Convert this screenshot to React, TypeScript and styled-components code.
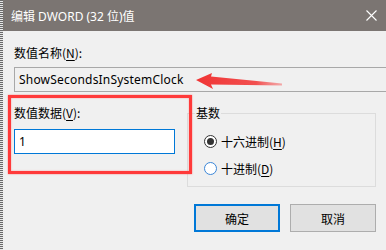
import React from "react";
import styled, { createGlobalStyle } from "styled-components";

const Global = createGlobalStyle`
  html, body { margin: 0; padding: 0; }
  body {
    width: 386px; height: 250px; overflow: hidden; background: #f0f0f0;
    font-family: "Segoe UI", "Noto Sans", "Noto Sans CJK SC", sans-serif;
    font-size: 12px; color: #000;
  }
`;

const Screen = styled.div`
  display: flex; width: 386px; height: 250px; overflow: hidden;
`;

const DottedEdge = styled.div`
  width: 3px; flex: none;
  background: repeating-linear-gradient(to bottom, #6a6a6a 0 1px, #e6e6e6 1px 2px);
`;

const Dialog = styled.div`
  flex: 1; min-width: 0; display: flex; flex-direction: column; background: #f0f0f0;
`;

const TitleBar = styled.div`
  height: 31px; flex: none; background: #7b7572; color: #fff;
  display: flex; align-items: center; justify-content: space-between;
  padding: 0 9px 0 8px;
  font-family: "Noto Sans", "Noto Sans CJK SC", sans-serif; font-size: 12px;
`;

const Content = styled.div`
  padding: 14px 10px 0 11px; display: flex; flex-direction: column;
`;

const Label = styled.div`
  line-height: 16px; height: 16px; white-space: nowrap;
  font-family: "Noto Sans CJK SC", sans-serif;
  u { text-decoration-thickness: 1px; text-underline-offset: 2px; }
`;

const NameField = styled.div`
  position: relative; margin-top: 6px; margin-right: -12px;
`;

const ReadonlyBox = styled.div`
  height: 25px; box-sizing: border-box; border: 1px solid #a8a8a8;
  background: #f0f0f0; padding-left: 4px; display: flex; align-items: center;
  font-family: "Noto Sans", sans-serif; font-size: 12px; letter-spacing: 0.2px; color: #000;
`;

const Arrow = styled.svg`
  position: absolute; left: 181px; top: 3px; width: 90px; height: 20px; overflow: visible;
`;

const MidGrid = styled.div`
  margin-top: 13px; display: grid; grid-template-columns: 161px 189px; column-gap: 12px;
  align-items: start;
`;

const DataColumn = styled.div`
  position: relative; display: flex; flex-direction: column;
`;

const EditBox = styled.div`
  margin-top: 8px; height: 25px; box-sizing: border-box; border: 1px solid #0078d7;
  background: #fff; padding-left: 4px; display: flex; align-items: center;
  font-family: "Noto Sans", sans-serif; font-size: 12px;
`;

const Highlight = styled.div`
  position: absolute; top: -10px; left: -6px; right: -17px; bottom: -20px;
  border: 3px solid #ff3a3a; box-shadow: 0 0 1.5px rgba(255, 70, 70, 0.7), inset 0 0 1.5px rgba(255, 70, 70, 0.7);
  pointer-events: none; z-index: 2;
`;

const GroupBox = styled.fieldset`
  margin: 0; border: 1px solid #dcdcdc; padding: 0 0 10px 7px; min-width: 0;
  display: flex; flex-direction: column; gap: 11px;
`;

const Legend = styled.legend`
  padding: 0 1px; line-height: 16px; font-family: "Noto Sans CJK SC", sans-serif;
  margin-bottom: 1px;
`;

const RadioRow = styled.div`
  display: flex; align-items: center; height: 16px; padding-left: 9px; gap: 4px;
  font-family: "Noto Sans CJK SC", sans-serif; white-space: nowrap;
  &:first-of-type { margin-top: 11px; }
  u { text-decoration-thickness: 1px; text-underline-offset: 2px; }
`;

const RadioDot = styled.span<{ $checked?: boolean }>`
  width: 13px; height: 13px; box-sizing: border-box; border-radius: 50%; flex: none;
  border: 1px solid ${(p) => (p.$checked ? "#333" : "#3a86d8")};
  background: #fff; display: flex; align-items: center; justify-content: center;
  &::after {
    content: ""; width: 7px; height: 7px; border-radius: 50%;
    background: ${(p) => (p.$checked ? "#333" : "transparent")};
  }
`;

const ButtonRow = styled.div`
  margin-top: 17px; display: flex; justify-content: flex-end; gap: 10px;
`;

const Button = styled.div<{ $primary?: boolean }>`
  width: 86px; height: 28px; box-sizing: border-box; background: #e1e1e1;
  border: ${(p) => (p.$primary ? "2px solid #0078d7" : "1px solid #adadad")};
  display: flex; align-items: center; justify-content: center;
  font-family: "Noto Sans CJK SC", sans-serif; font-size: 12px;
`;

export default function App() {
  return (
    <>
      <Global />
      <Screen>
        <DottedEdge />
        <Dialog>
          <TitleBar>
            <span>编辑 DWORD (32 位)值</span>
            <svg width="11" height="11" viewBox="0 0 11 11">
              <path d="M0.5 0.5 L10.5 10.5 M10.5 0.5 L0.5 10.5" stroke="#fff" strokeWidth="1.1" />
            </svg>
          </TitleBar>
          <Content>
            <Label>数值名称(<u>N</u>):</Label>
            <NameField>
              <ReadonlyBox>ShowSecondsInSystemClock</ReadonlyBox>
              <Arrow viewBox="0 0 90 20">
                <defs>
                  <linearGradient id="tail" x1="0" y1="0" x2="1" y2="0">
                    <stop offset="0" stopColor="#f03434" />
                    <stop offset="0.7" stopColor="#f25050" />
                    <stop offset="1" stopColor="#f47a7a" stopOpacity="0.6" />
                  </linearGradient>
                </defs>
                <polygon
                  points="1,10 17,3 16,6.5 87,13.5 87,15.5 16,14.5 18,19"
                  fill="url(#tail)"
                />
              </Arrow>
            </NameField>
            <MidGrid>
              <DataColumn>
                <Label>数值数据(<u>V</u>):</Label>
                <EditBox>1</EditBox>
                <Highlight />
              </DataColumn>
              <GroupBox>
                <Legend>基数</Legend>
                <RadioRow>
                  <RadioDot $checked />
                  <span>十六进制(<u>H</u>)</span>
                </RadioRow>
                <RadioRow>
                  <RadioDot />
                  <span>十进制(<u>D</u>)</span>
                </RadioRow>
              </GroupBox>
            </MidGrid>
            <ButtonRow>
              <Button $primary>确定</Button>
              <Button>取消</Button>
            </ButtonRow>
          </Content>
        </Dialog>
      </Screen>
    </>
  );
}
